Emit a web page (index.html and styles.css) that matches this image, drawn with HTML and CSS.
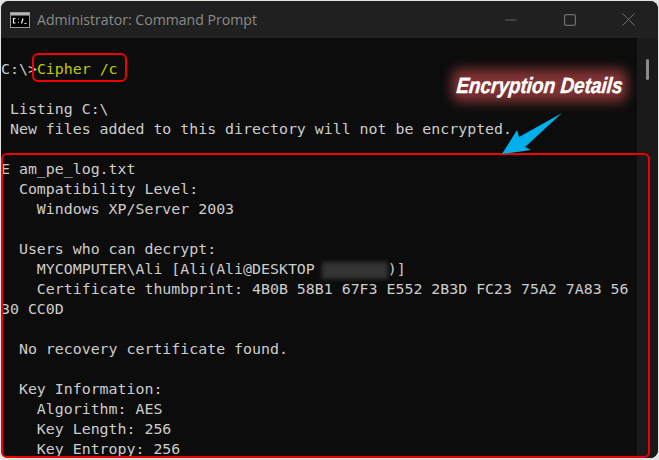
FILE: index.html
```html
<!DOCTYPE html>
<html lang="en">
<head>
<meta charset="utf-8">
<title>Administrator: Command Prompt</title>
<link rel="stylesheet" href="styles.css">
</head>
<body>
<div class="window">
  <header class="titlebar">
    <svg class="app-icon" width="20" height="16" viewBox="0 0 20 16">
      <rect x="0.5" y="0.5" width="19" height="15" fill="#000" stroke="#9a9a9a"/>
      <rect x="1" y="1" width="18" height="2.5" fill="#b8b8b8"/>
      <path d="M5.5 6.5H3.5V11H5.5M8 7H8.8M8 10.5H8.8M11.5 11.5L13 6.5M14.5 11.5H16.5" fill="none" stroke="#eee" stroke-width="1.2"/>
    </svg>
    <span class="title">Administrator: Command Prompt</span>
    <div class="controls">
      <svg width="14" height="2" viewBox="0 0 14 2"><path d="M1 1H13" stroke="#5e5e5e" stroke-width="1"/></svg>
      <svg width="12" height="12" viewBox="0 0 12 12"><rect x="0.6" y="0.6" width="10.8" height="10.8" rx="1.6" fill="none" stroke="#6e6e6e" stroke-width="1.2"/></svg>
      <svg width="13" height="13" viewBox="0 0 13 13"><path d="M0.5 0.5L12.5 12.5M12.5 0.5L0.5 12.5" stroke="#6e6e6e" stroke-width="1"/></svg>
    </div>
  </header>
  <div class="body">
    <pre class="console">

C:\&gt;<span class="command">Cipher /c</span>

 Listing C:\
 New files added to this directory will not be encrypted.

E am_pe_log.txt
  Compatibility Level:
    Windows XP/Server 2003

  Users who can decrypt:
    MYCOMPUTER\Ali [Ali(Ali@DESKTOP<span class="redacted"></span>)]
    Certificate thumbprint: 4B0B 58B1 67F3 E552 2B3D FC23 75A2 7A83 56
30 CC0D

  No recovery certificate found.

  Key Information:
    Algorithm: AES
    Key Length: 256
    Key Entropy: 256</pre>
    <div class="scrollbar"><div class="thumb"></div></div>
  </div>
</div>
<div class="mark mark-command"></div>
<div class="mark mark-details"></div>
<div class="callout"><span class="callout-text">Encryption Details</span></div>
<svg class="arrow" width="70" height="50" viewBox="0 0 70 50">
  <polygon points="2,42 17,18 19,25 62,1 25,35 31,38" fill="#00b0ec"/>
</svg>
</body>
</html>
```
FILE: styles.css
```css
html, body {
  margin: 0;
  height: 460px;
  overflow: hidden;
  background: #e4e4e4;
}
body {
  position: relative;
  padding: 1px 1px 0 1px;
  box-sizing: border-box;
}
.window {
  height: 457px;
  display: flex;
  flex-direction: column;
  background: #0c0c0c;
  border-radius: 8px;
  overflow: hidden;
}
.titlebar {
  height: 37px;
  flex: none;
  display: flex;
  align-items: center;
  background: #202020;
  padding-left: 9px;
}
.app-icon {
  flex: none;
  margin-right: 7px;
}
.title {
  font-family: "Open Sans", sans-serif;
  font-size: 14.1px;
  color: #8b8b8b;
}
.controls {
  margin-left: auto;
  display: flex;
  align-items: center;
  gap: 46px;
  padding-right: 23px;
}
.body {
  flex: 1;
  display: flex;
  min-height: 0;
}
.console {
  flex: 1;
  margin: 0;
  padding: 1px 0 0 0;
  font-family: "DejaVu Sans Mono", monospace;
  font-size: 14.9px;
  line-height: 20px;
  color: #cccccc;
  overflow: hidden;
}
.command {
  color: #c3c800;
}
.redacted {
  display: inline-block;
  width: 66px;
  height: 17px;
  margin-left: 7px;
  vertical-align: -5px;
  background: #343434;
  filter: blur(2px);
}
.scrollbar {
  width: 21px;
  flex: none;
  background: #1a1a1a;
}
.thumb {
  width: 3px;
  height: 21px;
  margin: 21px 0 0 9px;
  background: #8a8a8a;
  border-radius: 2px;
}
.mark {
  position: absolute;
  box-sizing: border-box;
  border: 2px solid #f00000;
  border-radius: 6px;
}
.mark-command {
  left: 32px;
  top: 53px;
  width: 95px;
  height: 29px;
}
.mark-details {
  left: 1px;
  top: 153px;
  width: 649px;
  height: 305px;
}
.callout {
  position: absolute;
  left: 447px;
  top: 64px;
  width: 185px;
  height: 43px;
  display: flex;
  align-items: center;
  justify-content: center;
}
.callout::before {
  content: "";
  position: absolute;
  inset: 5px;
  background: #813333;
  border-radius: 8px;
  filter: blur(6px);
}
.callout-text {
  position: relative;
  font-family: "Liberation Sans", sans-serif;
  font-size: 22px;
  font-weight: 700;
  font-style: italic;
  line-height: 24px;
  color: #fff;
  white-space: nowrap;
  transform: scaleX(0.86) skewX(-6deg);
  -webkit-text-stroke: 0.4px #fff;
}
.arrow {
  position: absolute;
  left: 500px;
  top: 112px;
}
```
